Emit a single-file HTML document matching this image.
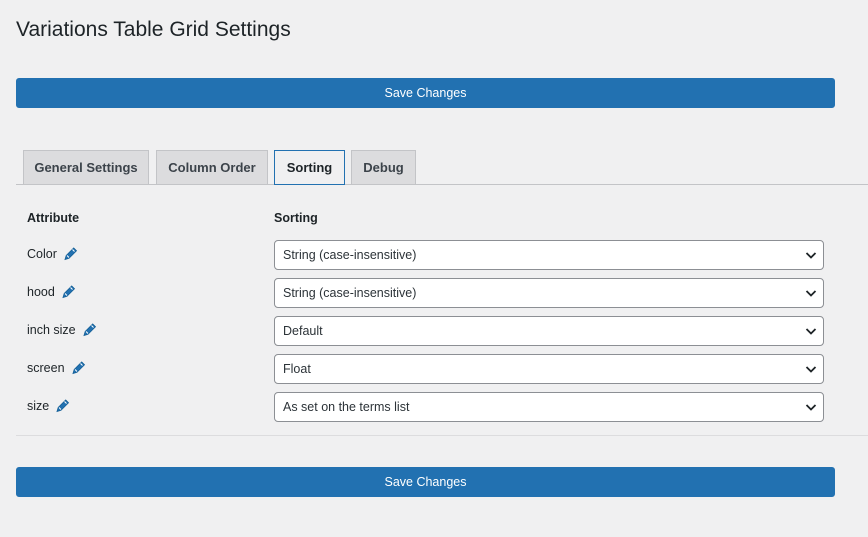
<!DOCTYPE html>
<html><head><meta charset="utf-8"><style>
*{box-sizing:border-box;margin:0;padding:0}
body{width:868px;height:537px;background:#f0f0f1;font-family:"Liberation Sans",sans-serif;color:#1d2327;position:relative;overflow:hidden;font-size:13px}
.a{position:absolute}
h1{position:absolute;left:16px;top:18px;font-size:21px;font-weight:400;color:#1d2327}
.btn{position:absolute;left:16px;width:819px;height:30px;background:#2271b1;border:1px solid #2271b1;border-radius:3px;color:#fff;font-size:12.5px;text-align:center;line-height:28px}
.tab{position:absolute;top:150px;height:34px;background:#dcdcde;border:1px solid #c3c4c7;border-bottom:none;font-size:13px;font-weight:600;color:#3c434a;text-align:center;line-height:33px}
.tab.on{background:#f0f0f1;border:1px solid #2271b1;height:35px;color:#1d2327}
.sel{position:absolute;left:274px;width:550px;height:30px;background:#fff;border:1px solid #8c8f94;border-radius:4px;font-size:12.5px;line-height:28px;padding-left:8px;color:#2c3338}
.sel svg{position:absolute;right:6px;top:9px}
.lab{position:absolute;left:27px;font-size:12.5px;color:#1d2327}
.lab svg{vertical-align:-3px;margin-left:6px}
</style></head><body>
<h1>Variations Table Grid Settings</h1>
<div class="btn" style="top:78px">Save Changes</div>
<div class="a" style="left:16px;top:184px;width:852px;height:1px;background:#c3c4c7"></div>
<div class="tab" style="left:23px;width:126px">General Settings</div>
<div class="tab" style="left:156px;width:112px">Column Order</div>
<div class="tab on" style="left:274px;width:71px">Sorting</div>
<div class="tab" style="left:351px;width:65px">Debug</div>
<div class="a" style="left:27px;top:211px;font-weight:700;font-size:12.5px">Attribute</div>
<div class="a" style="left:274px;top:211px;font-weight:700;font-size:12.5px">Sorting</div>

<div class="lab" style="top:246px">Color<svg width="15" height="15" viewBox="0 0 15 15"><path d="M2 13.5l1.2-4 7.5-7.5 2.8 2.8-7.5 7.5z" fill="#2271b1" stroke="#135e96" stroke-width="0.8"/><path d="M4 9.5l2 2M9.5 3.5l2 2" stroke="#fff" stroke-width="1"/></svg></div>
<div class="lab" style="top:284px">hood<svg width="15" height="15" viewBox="0 0 15 15"><path d="M2 13.5l1.2-4 7.5-7.5 2.8 2.8-7.5 7.5z" fill="#2271b1" stroke="#135e96" stroke-width="0.8"/><path d="M4 9.5l2 2M9.5 3.5l2 2" stroke="#fff" stroke-width="1"/></svg></div>
<div class="lab" style="top:322px">inch size<svg width="15" height="15" viewBox="0 0 15 15"><path d="M2 13.5l1.2-4 7.5-7.5 2.8 2.8-7.5 7.5z" fill="#2271b1" stroke="#135e96" stroke-width="0.8"/><path d="M4 9.5l2 2M9.5 3.5l2 2" stroke="#fff" stroke-width="1"/></svg></div>
<div class="lab" style="top:360px">screen<svg width="15" height="15" viewBox="0 0 15 15"><path d="M2 13.5l1.2-4 7.5-7.5 2.8 2.8-7.5 7.5z" fill="#2271b1" stroke="#135e96" stroke-width="0.8"/><path d="M4 9.5l2 2M9.5 3.5l2 2" stroke="#fff" stroke-width="1"/></svg></div>
<div class="lab" style="top:398px">size<svg width="15" height="15" viewBox="0 0 15 15"><path d="M2 13.5l1.2-4 7.5-7.5 2.8 2.8-7.5 7.5z" fill="#2271b1" stroke="#135e96" stroke-width="0.8"/><path d="M4 9.5l2 2M9.5 3.5l2 2" stroke="#fff" stroke-width="1"/></svg></div>

<div class="sel" style="top:240px">String (case-insensitive)<svg width="12" height="10" viewBox="0 0 12 10"><path d="M1.5 3l4.5 4.5 4.5-4.5" stroke="#1d2327" stroke-width="1.8" fill="none"/></svg></div>
<div class="sel" style="top:278px">String (case-insensitive)<svg width="12" height="10" viewBox="0 0 12 10"><path d="M1.5 3l4.5 4.5 4.5-4.5" stroke="#1d2327" stroke-width="1.8" fill="none"/></svg></div>
<div class="sel" style="top:316px">Default<svg width="12" height="10" viewBox="0 0 12 10"><path d="M1.5 3l4.5 4.5 4.5-4.5" stroke="#1d2327" stroke-width="1.8" fill="none"/></svg></div>
<div class="sel" style="top:354px">Float<svg width="12" height="10" viewBox="0 0 12 10"><path d="M1.5 3l4.5 4.5 4.5-4.5" stroke="#1d2327" stroke-width="1.8" fill="none"/></svg></div>
<div class="sel" style="top:392px">As set on the terms list<svg width="12" height="10" viewBox="0 0 12 10"><path d="M1.5 3l4.5 4.5 4.5-4.5" stroke="#1d2327" stroke-width="1.8" fill="none"/></svg></div>

<div class="a" style="left:16px;top:435px;width:852px;height:1px;background:#dcdcde"></div>
<div class="btn" style="top:467px">Save Changes</div>
</body></html>
